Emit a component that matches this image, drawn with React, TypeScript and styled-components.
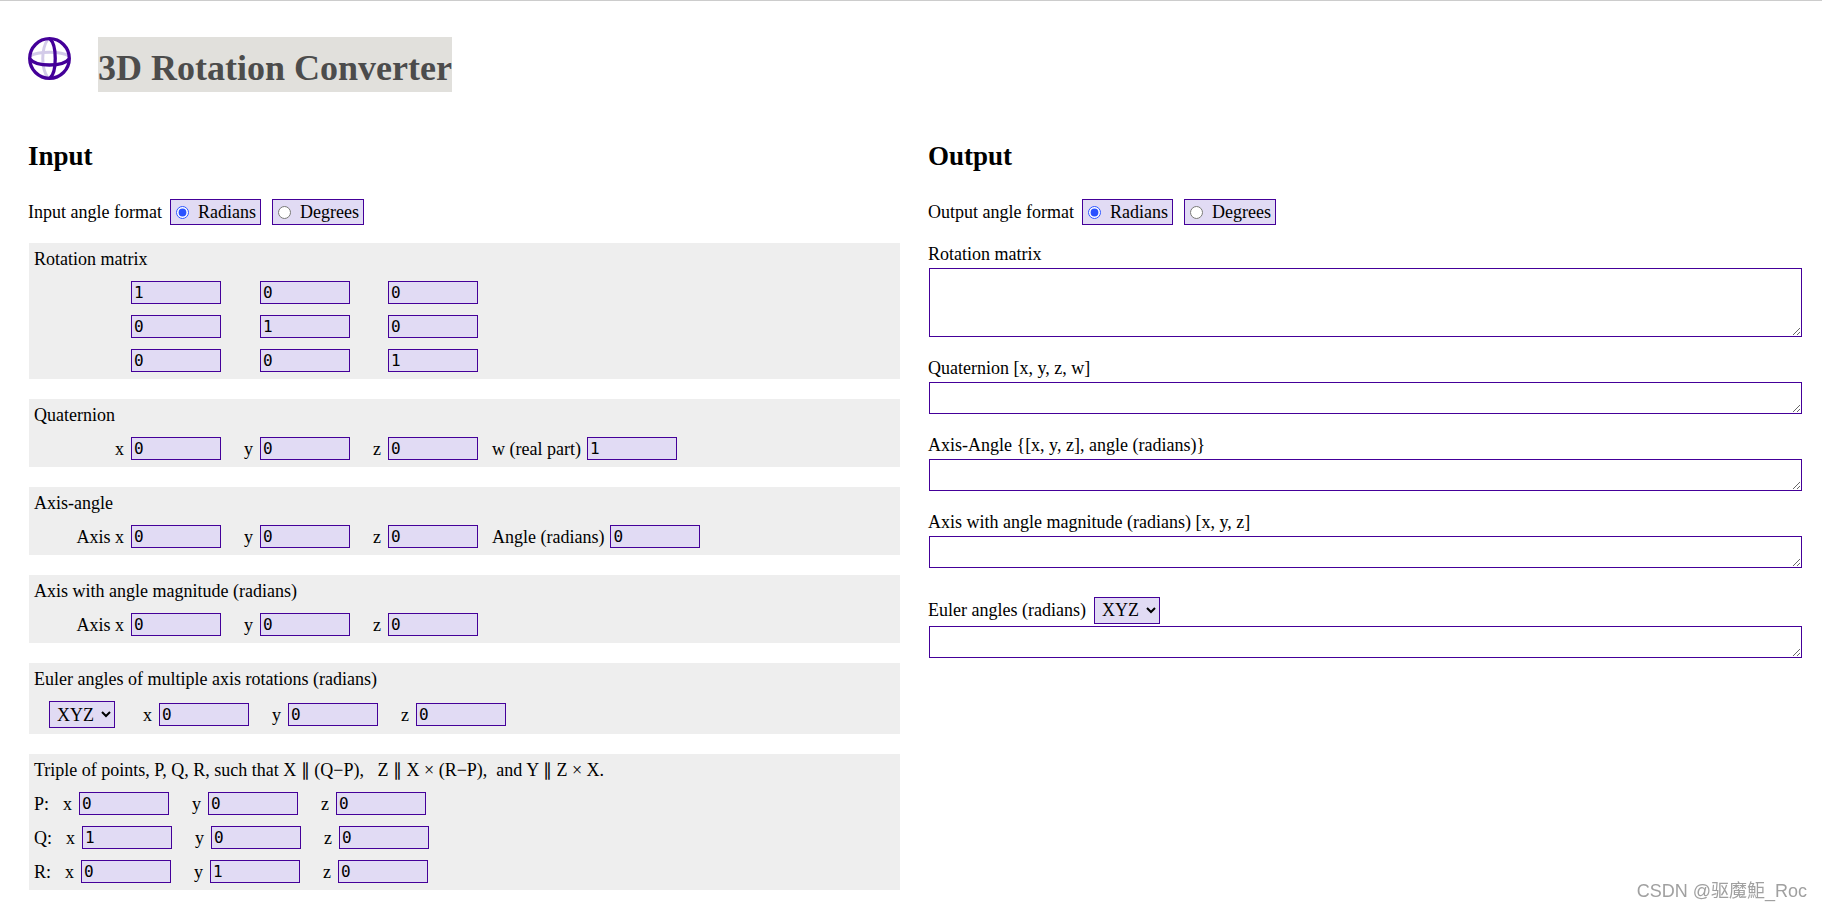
import React, { useId, useState } from "react";
import styled, { createGlobalStyle } from "styled-components";

const purple = "#440099";
const lilac = "#e1dbf4";

const GlobalStyle = createGlobalStyle`
  * { box-sizing: border-box; }
  body {
    margin: 0;
    background: #fff;
    color: #000;
    font: 18px/20px "Liberation Serif", "Times New Roman", serif;
  }
`;

const Page = styled.div`
  border-top: 1px solid #ccc;
  padding: 36px 19px 20px 28px;
`;

const Header = styled.header`
  display: flex;
  align-items: flex-start;
  gap: 27px;
`;

const Logo = styled.svg`
  width: 43px;
  height: 43px;
  flex: none;
`;

const Title = styled.h1`
  margin: 0;
  padding: 11px 0 3px;
  background: #e1e0dc;
  color: #4c4c4c;
  font-size: 36px;
  line-height: 41px;
`;

const Columns = styled.main`
  display: grid;
  grid-template-columns: 1fr 1fr;
  gap: 25px;
  padding-top: 49px;
`;

const Heading = styled.h2`
  margin: 0;
  font-size: 27px;
  line-height: 30px;
`;

const FormatRow = styled.div`
  display: flex;
  align-items: center;
  gap: 11px;
  margin: 28px 0 18px;
`;

const FormatName = styled.span`
  margin-right: -3px;
`;

const Choice = styled.label`
  display: flex;
  align-items: center;
  gap: 9px;
  height: 26px;
  padding: 0 4px 0 5px;
  border: 1px solid ${purple};
  background: ${lilac};
`;

const Radio = styled.input`
  width: 13px;
  height: 13px;
  margin: 0;
  accent-color: #2a52ff;
`;

const Panels = styled.div`
  display: grid;
  gap: 20px;
  padding: 0 3px 0 1px;
`;

const Panel = styled.section`
  background: #eee;
  padding: 6px 5px 7px;
`;

const PanelTitle = styled.div`
  height: 32px;
`;

const Rows = styled.div`
  display: grid;
  gap: 11px;
`;

const Row = styled.div`
  display: flex;
  align-items: center;
`;

const OrderRow = styled(Row)`
  gap: 28px;
  padding-left: 15px;
  margin-bottom: -1px;
`;

const PointRow = styled(Row)`
  gap: 14px;
`;

const Fields = styled.div`
  display: flex;
  gap: 23px;
`;

const Field = styled.label<{ $lead?: boolean }>`
  display: flex;
  align-items: center;
  gap: 7px;
  > span {
    min-width: ${(p) => (p.$lead ? "90px" : "0")};
    text-align: right;
    white-space: pre;
  }
`;

const LastField = styled(Field)`
  margin-left: -9px;
  gap: 6px;
`;

const Blank = styled.span`
  visibility: hidden;
`;

const NumberBox = styled.input`
  width: 90px;
  height: 23px;
  margin: 0;
  padding: 1px 2px;
  border: 1px solid ${purple};
  border-radius: 0;
  background: ${lilac};
  color: #000;
  font: 16px/19px "DejaVu Sans Mono", monospace;
`;

const OrderSelect = styled.select`
  width: 66px;
  height: 27px;
  margin: 0;
  padding: 0 0 0 3px;
  border: 1px solid ${purple};
  border-radius: 0;
  background: ${lilac};
  color: #000;
  font: inherit;
`;

const Outputs = styled.div`
  display: grid;
  gap: 21px;
  padding-top: 1px;
`;

const Output = styled.div`
  display: grid;
  gap: 4px;
`;

const OrderOutput = styled.div`
  display: grid;
  gap: 2px;
  padding-top: 7px;
`;

const OrderLabel = styled.div`
  display: flex;
  align-items: center;
  gap: 8px;
  height: 28px;
`;

const Result = styled.textarea<{ $tall?: boolean }>`
  display: block;
  width: calc(100% - 2px);
  height: ${(p) => (p.$tall ? "69px" : "32px")};
  margin: 0 1px;
  padding: 2px;
  border: 1px solid ${purple};
  border-radius: 0;
  background: #fff;
  font: 16px/19px "DejaVu Sans Mono", monospace;
`;

const Watermark = styled.div`
  position: fixed;
  right: 15px;
  bottom: 8px;
  color: #a0a0a0;
  font: 18px/20px "Liberation Sans", "Noto Sans CJK SC", sans-serif;
`;

function Globe() {
  return (
    <Logo viewBox="0 0 43 43" fill="none" aria-hidden="true">
      <g stroke="#d3cbe9" strokeWidth="3">
        <path d="M2 19C10 14 33 14 41 19" />
        <path d="M20 2C13 12 13 31 20 41" />
      </g>
      <g stroke={purple} strokeWidth="3.3">
        <path d="M2 22C8 30 35 30 41 22" />
        <path d="M22 2C29 8 29 35 22 41" />
        <circle cx="21.5" cy="21.5" r="19.8" />
      </g>
    </Logo>
  );
}

function AngleFormat({ name }: { name: string }) {
  const [unit, setUnit] = useState("Radians");
  return (
    <FormatRow role="radiogroup" aria-label={name}>
      <FormatName>{name}</FormatName>
      {["Radians", "Degrees"].map((u) => (
        <Choice key={u}>
          <Radio type="radio" name={name} checked={unit === u} onChange={() => setUnit(u)} />
          {u}
        </Choice>
      ))}
    </FormatRow>
  );
}

function Order({ id, label }: { id?: string; label?: string }) {
  return (
    <OrderSelect id={id} aria-label={label} defaultValue="XYZ">
      {["XYZ", "YZX", "ZXY", "XZY", "YXZ", "ZYX"].map((o) => (
        <option key={o}>{o}</option>
      ))}
    </OrderSelect>
  );
}

function Vector({ values, lead }: { values: number[]; lead?: string }) {
  return (
    <>
      {["x", "y", "z"].map((axis, i) => (
        <Field key={axis} $lead={i === 0 && lead !== undefined}>
          <span>{i === 0 && lead ? `${lead} ${axis}` : axis}</span>
          <NumberBox defaultValue={values[i]} />
        </Field>
      ))}
    </>
  );
}

function MatrixRow({ row, values }: { row: number; values: number[] }) {
  return (
    <Fields>
      {["x", "y", "z"].map((axis, i) => (
        <Field key={axis} $lead={i === 0}>
          <Blank>{axis}</Blank>
          <NumberBox aria-label={`Row ${row}, column ${i + 1}`} defaultValue={values[i]} />
        </Field>
      ))}
    </Fields>
  );
}

function ResultField({ label, tall }: { label: string; tall?: boolean }) {
  const id = useId();
  return (
    <Output>
      <label htmlFor={id}>{label}</label>
      <Result id={id} $tall={tall} readOnly />
    </Output>
  );
}

export default function App() {
  const points: [string, number[]][] = [
    ["P:", [0, 0, 0]],
    ["Q:", [1, 0, 0]],
    ["R:", [0, 1, 0]],
  ];
  return (
    <>
      <GlobalStyle />
      <Page>
        <Header>
          <Globe />
          <Title>3D Rotation Converter</Title>
        </Header>
        <Columns>
          <section>
            <Heading>Input</Heading>
            <AngleFormat name="Input angle format" />
            <Panels>
              <Panel>
                <PanelTitle>Rotation matrix</PanelTitle>
                <Rows>
                  <MatrixRow row={1} values={[1, 0, 0]} />
                  <MatrixRow row={2} values={[0, 1, 0]} />
                  <MatrixRow row={3} values={[0, 0, 1]} />
                </Rows>
              </Panel>
              <Panel>
                <PanelTitle>Quaternion</PanelTitle>
                <Fields>
                  <Vector values={[0, 0, 0]} lead="" />
                  <LastField>
                    <span>w (real part)</span>
                    <NumberBox defaultValue={1} />
                  </LastField>
                </Fields>
              </Panel>
              <Panel>
                <PanelTitle>Axis-angle</PanelTitle>
                <Fields>
                  <Vector values={[0, 0, 0]} lead="Axis" />
                  <LastField>
                    <span>Angle (radians)</span>
                    <NumberBox defaultValue={0} />
                  </LastField>
                </Fields>
              </Panel>
              <Panel>
                <PanelTitle>Axis with angle magnitude (radians)</PanelTitle>
                <Fields>
                  <Vector values={[0, 0, 0]} lead="Axis" />
                </Fields>
              </Panel>
              <Panel>
                <PanelTitle>Euler angles of multiple axis rotations (radians)</PanelTitle>
                <OrderRow>
                  <Order label="Axis order" />
                  <Fields>
                    <Vector values={[0, 0, 0]} />
                  </Fields>
                </OrderRow>
              </Panel>
              <Panel>
                <PanelTitle>
                  Triple of points, P, Q, R, such that X ∥ (Q−P), &nbsp; Z ∥ X × (R−P),&nbsp; and Y ∥ Z × X.
                </PanelTitle>
                <Rows>
                  {points.map(([name, values]) => (
                    <PointRow key={name}>
                      <span>{name}</span>
                      <Fields>
                        <Vector values={values} />
                      </Fields>
                    </PointRow>
                  ))}
                </Rows>
              </Panel>
            </Panels>
          </section>
          <section>
            <Heading>Output</Heading>
            <AngleFormat name="Output angle format" />
            <Outputs>
              <ResultField label="Rotation matrix" tall />
              <ResultField label="Quaternion [x, y, z, w]" />
              <ResultField label="Axis-Angle {[x, y, z], angle (radians)}" />
              <ResultField label="Axis with angle magnitude (radians) [x, y, z]" />
              <OrderOutput>
                <OrderLabel>
                  <label htmlFor="output-order">Euler angles (radians)</label>
                  <Order id="output-order" />
                </OrderLabel>
                <Result aria-label="Euler angles" readOnly />
              </OrderOutput>
            </Outputs>
          </section>
        </Columns>
      </Page>
      <Watermark>CSDN @驱魔鮔_Roc</Watermark>
    </>
  );
}
